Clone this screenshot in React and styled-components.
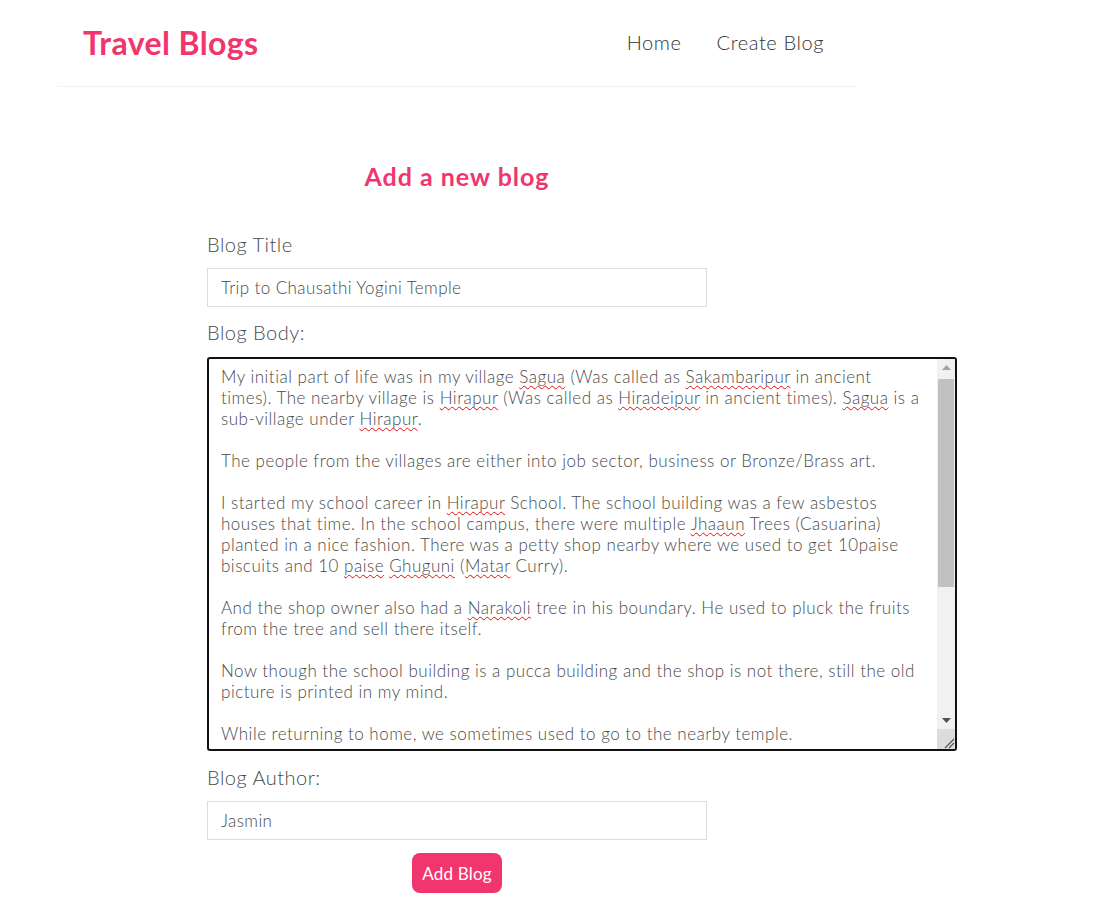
import React from "react";
import styled, { createGlobalStyle } from "styled-components";

const GlobalStyle = createGlobalStyle`
  * { box-sizing: border-box; }
  body {
    margin: 0;
    background: #fff;
    font-family: Lato, "Open Sans", sans-serif;
    color: #333;
  }
`;

const PINK = "#f1356d";

const Page = styled.div`
  width: 914px;
`;

const Navbar = styled.nav`
  max-width: 798px;
  margin: 0 auto;
  height: 87px;
  padding: 0 20px 2px 25px;
  display: flex;
  align-items: center;
  border-bottom: 1px solid #f2f2f2;
`;

const Logo = styled.h1`
  margin: 0;
  font-size: 32px;
  font-weight: 700;
  color: ${PINK};
  letter-spacing: 0.4px;
`;

const Links = styled.div`
  margin-left: auto;
  display: flex;
  gap: 35px;
  padding-right: 12px;
`;

const NavLink = styled.a`
  font-size: 20px;
  font-weight: 300;
  letter-spacing: 0.6px;
  color: #333;
  text-decoration: none;
  cursor: pointer;
`;

const Create = styled.div`
  width: 500px;
  margin: 0 auto;
  padding-top: 75px;
`;

const Heading = styled.h2`
  margin: 0 0 42px;
  text-align: center;
  font-size: 25px;
  line-height: 28px;
  font-weight: 700;
  letter-spacing: 1px;
  color: ${PINK};
`;

const Label = styled.label`
  display: block;
  font-size: 20px;
  line-height: 24px;
  font-weight: 300;
  letter-spacing: 0.5px;
  color: #4a4a4a;
`;

const Input = styled.input`
  display: block;
  width: 100%;
  height: 39px;
  margin: 12px 0 13px;
  padding: 0 13px;
  border: 1px solid #ddd;
  font-family: inherit;
  font-size: 17px;
  font-weight: 300;
  letter-spacing: 0.4px;
  color: #4a4a4a;
  outline: none;
`;

const BodyBox = styled.div`
  width: 750px;
  height: 394px;
  margin: 13px 0 14px;
  border: 2px solid #111;
  border-radius: 3px;
  display: flex;
  overflow: hidden;
  background: #fff;
`;

const BodyText = styled.div`
  flex: 1;
  padding: 7px 12px;
  font-size: 17px;
  font-weight: 300;
  letter-spacing: 0.5px;
  line-height: 21px;
  color: #4a4a4a;
  overflow: hidden;
`;

const Line = styled.div`
  white-space: nowrap;
  min-height: 21px;
`;

const Miss = styled.span`
  text-decoration: underline wavy #e01010;
  text-decoration-thickness: 1px;
  text-underline-offset: 2px;
  text-decoration-skip-ink: none;
`;

const Scrollbar = styled.div`
  width: 18px;
  display: flex;
  flex-direction: column;
  background: #f1f1f1;
`;

const ArrowButton = styled.div`
  height: 17px;
  display: flex;
  align-items: center;
  justify-content: center;
`;

const Track = styled.div`
  flex: 1;
  padding-top: 3px;
`;

const Thumb = styled.div`
  height: 208px;
  margin-left: 1px;
  width: 16px;
  background: #c1c1c1;
`;

const Resizer = styled.div`
  height: 20px;
  background: #dcdcdc;
  display: flex;
  align-items: flex-end;
  justify-content: flex-end;
`;

const Button = styled.button`
  display: block;
  margin: 13px auto 0;
  height: 40px;
  padding: 0 10px;
  background: ${PINK};
  color: #fff;
  border: 0;
  border-radius: 8px;
  font-family: inherit;
  font-size: 17px;
  font-weight: 400;
  letter-spacing: 0.2px;
  cursor: pointer;
`;

const Up = () => (
  <svg width="9" height="5" viewBox="0 0 9 5"><path d="M0 5 L4.5 0 L9 5 Z" fill="#a3a3a3" /></svg>
);
const Down = () => (
  <svg width="9" height="5" viewBox="0 0 9 5"><path d="M0 0 L9 0 L4.5 5 Z" fill="#505050" /></svg>
);
const Grip = () => (
  <svg width="12" height="12" viewBox="0 0 12 12">
    <path d="M2 11 L11 2 M6 11 L11 6" stroke="#555" strokeWidth="1.2" />
  </svg>
);

const lines = [
  <>My initial part of life was in my village <Miss>Sagua</Miss> (Was called as <Miss>Sakambaripur</Miss> in ancient</>,
  <>times). The nearby village is <Miss>Hirapur</Miss> (Was called as <Miss>Hiradeipur</Miss> in ancient times). <Miss>Sagua</Miss> is a</>,
  <>sub-village under <Miss>Hirapur</Miss>.</>,
  null,
  <>The people from the villages are either into job sector, business or Bronze/Brass art.</>,
  null,
  <>I started my school career in <Miss>Hirapur</Miss> School. The school building was a few asbestos</>,
  <>houses that time. In the school campus, there were multiple <Miss>Jhaaun</Miss> Trees (Casuarina)</>,
  <>planted in a nice fashion. There was a petty shop nearby where we used to get 10paise</>,
  <>biscuits and 10 <Miss>paise</Miss> <Miss>Ghuguni</Miss> (<Miss>Matar</Miss> Curry).</>,
  null,
  <>And the shop owner also had a <Miss>Narakoli</Miss> tree in his boundary. He used to pluck the fruits</>,
  <>from the tree and sell there itself.</>,
  null,
  <>Now though the school building is a pucca building and the shop is not there, still the old</>,
  <>picture is printed in my mind.</>,
  null,
  <>While returning to home, we sometimes used to go to the nearby temple.</>,
];

export default function App() {
  return (
    <>
      <GlobalStyle />
      <Page>
        <Navbar>
          <Logo>Travel Blogs</Logo>
          <Links>
            <NavLink>Home</NavLink>
            <NavLink>Create Blog</NavLink>
          </Links>
        </Navbar>
        <Create>
          <Heading>Add a new blog</Heading>
          <form onSubmit={(e) => e.preventDefault()}>
            <Label>Blog Title</Label>
            <Input type="text" defaultValue="Trip to Chausathi Yogini Temple" />
            <Label>Blog Body:</Label>
            <BodyBox role="textbox" aria-multiline="true">
              <BodyText>
                {lines.map((l, i) => (
                  <Line key={i}>{l}</Line>
                ))}
              </BodyText>
              <Scrollbar>
                <ArrowButton><Up /></ArrowButton>
                <Track><Thumb /></Track>
                <ArrowButton><Down /></ArrowButton>
                <Resizer><Grip /></Resizer>
              </Scrollbar>
            </BodyBox>
            <Label>Blog Author:</Label>
            <Input type="text" defaultValue="Jasmin" />
            <Button type="submit">Add Blog</Button>
          </form>
        </Create>
      </Page>
    </>
  );
}
